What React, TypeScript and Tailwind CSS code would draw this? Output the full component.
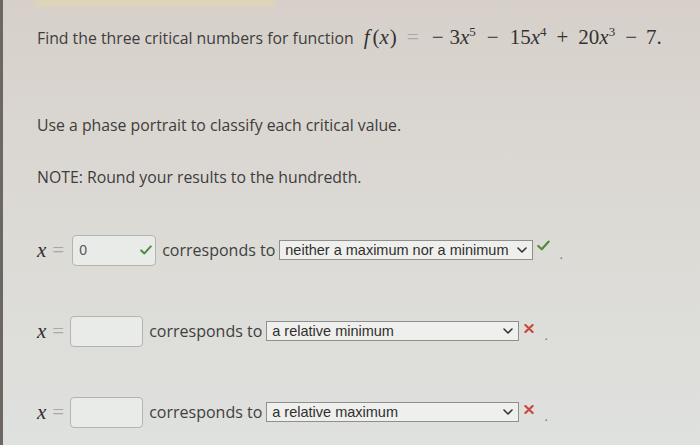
import React from "react";

const sans = "font-['Open_Sans',sans-serif]";
const serif = "font-['Liberation_Serif','DejaVu_Serif',serif]";
const arial = "font-['Liberation_Sans',Arial,sans-serif]";

function MathX() {
  return (
    <span className={`${serif} flex items-baseline text-[21px] text-[#2e2e2e]`}>
      <span className="italic">x</span>
      <span className="ml-[6px] text-[#a8a8a8]">=</span>
    </span>
  );
}

function Check({ className }: { className?: string }) {
  return (
    <svg viewBox="0 0 12 10" className={className}>
      <path d="M1.2 5.4 L4.4 8.4 L10.8 1.4" fill="none" stroke="#4f8a3c" strokeWidth="2" strokeLinecap="round" strokeLinejoin="round" />
    </svg>
  );
}

function Cross() {
  return (
    <svg viewBox="0 0 12 10" className="w-[12px] h-[9px] mt-[4px]">
      <path d="M2 1 L10 9 M10 1 L2 9" stroke="#c8463a" strokeWidth="2.4" strokeLinecap="round" />
    </svg>
  );
}

function Chevron() {
  return (
    <svg viewBox="0 0 10 6" className="w-[10px] h-[6px]">
      <path d="M1 1 L5 5 L9 1" fill="none" stroke="#333" strokeWidth="1.6" strokeLinecap="round" strokeLinejoin="round" />
    </svg>
  );
}

function Row({
  first,
  label,
  mark,
}: {
  first?: boolean;
  label: string;
  mark: "ok" | "bad";
}) {
  return (
    <div className="flex items-center h-[31px]">
      <MathX />
      {first ? (
        <div className="ml-[8px] w-[84px] h-[31px] rounded-[4px] border border-[#b3b4b0] bg-[#e9ebe8] flex items-center justify-between pl-[6px] pr-[3px]">
          <span className={`${arial} text-[14px] text-[#555]`}>0</span>
          <Check className="w-[12px] h-[10px]" />
        </div>
      ) : (
        <div className="ml-[6px] w-[73px] h-[31px] rounded-[4px] border border-[#b3b4b0] bg-[#e9ebe8]" />
      )}
      <span className={`${sans} ml-[6px] text-[16px] text-[#3f3f3f]`}>corresponds to</span>
      <div
        className={`ml-[4px] h-[20px] border border-[#8e908c] bg-[#eff0ed] flex items-center justify-between pl-[5px] pr-[5px] ${
          first ? "w-[254px]" : "w-[253px]"
        }`}
      >
        <span className={`${arial} text-[14.5px] text-[#2f2f2f] leading-none`}>{label}</span>
        <Chevron />
      </div>
      <div className="self-start mt-[4px] ml-[4px]">
        {mark === "ok" ? <Check className="w-[13px] h-[11px] mt-[1px]" /> : <Cross />}
      </div>
      <span className={`${arial} ml-[9px] mt-[8px] text-[14px] text-[#777]`}>.</span>
    </div>
  );
}

export default function App() {
  return (
    <div className="w-[700px] h-[445px] relative overflow-hidden border-l-[3px] border-[#6d6762] bg-gradient-to-b from-[#d7d0ca] via-[#dcdad5] to-[#dfe1de]">
      {/* yellowish strip at top edge */}
      <div className="absolute left-[32px] top-0 w-[240px] h-[6px] bg-[#e0d6b2] blur-[2px]" />

      <div className="pl-[34px] pt-[22px] flex flex-col">
        <div className="flex items-baseline">
          <span className={`${sans} text-[15.8px] text-[#3d3d3d]`}>
            Find the three critical numbers for function
          </span>
          <span className={`${serif} ml-[10px] text-[21px] text-[#333] flex items-baseline`}>
            <span className="italic">f</span>
            <span className="ml-[3px]">(</span>
            <span className="italic">x</span>
            <span className="ml-[1px]">)</span>
            <span className="ml-[10px] text-[#a8a8a8]">=</span>
            <span className="ml-[13px]">−</span>
            <span className="ml-[6px]">3</span>
            <span className="italic">x</span>
            <sup className="text-[13px] -top-[0.6em]">5</sup>
            <span className="ml-[11px]">−</span>
            <span className="ml-[11px]">15</span>
            <span className="italic">x</span>
            <sup className="text-[13px] -top-[0.6em]">4</sup>
            <span className="ml-[10px]">+</span>
            <span className="ml-[10px]">20</span>
            <span className="italic">x</span>
            <sup className="text-[13px] -top-[0.6em]">3</sup>
            <span className="ml-[10px]">−</span>
            <span className="ml-[9px]">7.</span>
          </span>
        </div>

        <p className={`${sans} mt-[60px] text-[15.8px] text-[#3d3d3d]`}>
          Use a phase portrait to classify each critical value.
        </p>

        <p className={`${sans} mt-[29px] text-[15.8px] text-[#3d3d3d]`}>
          NOTE: Round your results to the hundredth.
        </p>

        <div className="mt-[45px] flex flex-col gap-[50px]">
          <Row first label="neither a maximum nor a minimum" mark="ok" />
          <Row label="a relative minimum" mark="bad" />
          <Row label="a relative maximum" mark="bad" />
        </div>
      </div>
    </div>
  );
}
